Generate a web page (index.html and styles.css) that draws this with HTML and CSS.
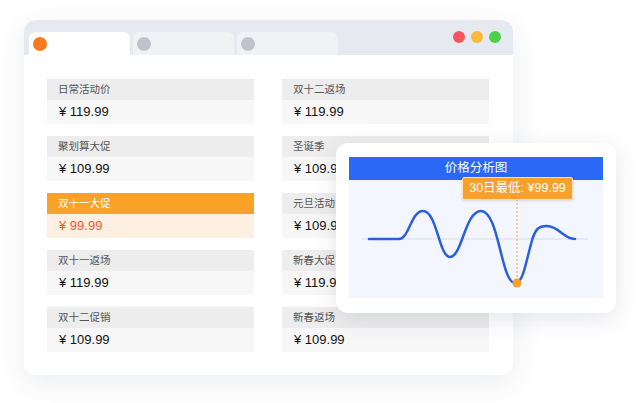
FILE: index.html
```html
<!DOCTYPE html>
<html lang="zh-CN">
<head>
  <meta charset="UTF-8" />
  <title>价格分析</title>
  <link rel="stylesheet" href="styles.css">
</head>
<body>
  <div class="stage">
    <div class="window">
      <div class="title-bar">
        <div class="tab active"><span class="tab-dot"></span></div>
        <div class="tab"><span class="tab-dot"></span></div>
        <div class="tab"><span class="tab-dot"></span></div>
        <div class="controls">
          <span class="ctl red"></span>
          <span class="ctl yellow"></span>
          <span class="ctl green"></span>
        </div>
      </div>
      <div class="content">
        <div class="col">
          <div class="item"><div class="label">日常活动价</div><div class="price">¥ 119.99</div></div>
          <div class="item"><div class="label">聚划算大促</div><div class="price">¥ 109.99</div></div>
          <div class="item hot"><div class="label">双十一大促</div><div class="price">¥ 99.99</div></div>
          <div class="item"><div class="label">双十一返场</div><div class="price">¥ 119.99</div></div>
          <div class="item"><div class="label">双十二促销</div><div class="price">¥ 109.99</div></div>
        </div>
        <div class="col">
          <div class="item"><div class="label">双十二返场</div><div class="price">¥ 119.99</div></div>
          <div class="item"><div class="label">圣诞季</div><div class="price">¥ 109.99</div></div>
          <div class="item"><div class="label">元旦活动</div><div class="price">¥ 109.99</div></div>
          <div class="item"><div class="label">新春大促</div><div class="price">¥ 119.99</div></div>
          <div class="item"><div class="label">新春返场</div><div class="price">¥ 109.99</div></div>
        </div>
      </div>
    </div>

    <div class="chart-card">
      <div class="chart-head">价格分析图</div>
      <div class="chart-body">
        <svg width="254" height="118" viewBox="0 0 254 118">
          <line x1="13" y1="59" x2="239" y2="59" stroke="#d6dcec" stroke-width="1"/>
          <line x1="168" y1="19" x2="168" y2="103" stroke="#f4a03a" stroke-width="1" stroke-dasharray="2 2"/>
          <path d="M20 59 H50 C60 59 62 31 74 31 C88 31 90 77 101 77 C113 77 116 31 132 31 C150 31 152 103 166 103 C174 103 176 86 182 64 C186 48 190 46 198 46 C210 46 214 59 226 59"
                fill="none" stroke="#2a5fe0" stroke-width="2.5" stroke-linecap="round"/>
          <circle cx="168" cy="103" r="4.5" fill="#f7a12b"/>
        </svg>
        <div class="tip">30日最低: ¥99.99</div>
      </div>
    </div>
  </div>
</body>
</html>
```

FILE: styles.css
```css
* { box-sizing: border-box; }
body {
  margin: 0;
  background: #fff;
  font-family: "Liberation Sans", "Noto Sans CJK SC", sans-serif;
}
.stage {
  position: relative;
  width: 640px;
  height: 403px;
  padding: 20px 0 0 24px;
}
.window {
  width: 489px;
  height: 355px;
  background: #fff;
  border-radius: 12px;
  overflow: hidden;
  box-shadow: 0 8px 30px rgba(40, 50, 80, 0.09);
}
.title-bar {
  height: 35px;
  background: #e7e9f1;
  display: flex;
  align-items: flex-end;
  padding-left: 5px;
  gap: 3px;
}
.tab {
  width: 101px;
  height: 23px;
  background: #f1f2f6;
  border-radius: 7px 7px 0 0;
  display: flex;
  align-items: center;
  padding-left: 4px;
}
.tab.active { background: #fff; }
.tab-dot {
  width: 14px;
  height: 14px;
  border-radius: 50%;
  background: #c1c2cc;
}
.tab.active .tab-dot { background: #f87b1f; }
.controls {
  margin-left: auto;
  align-self: flex-start;
  display: flex;
  gap: 6px;
  padding: 11px 12px 0 0;
}
.ctl {
  width: 12px;
  height: 12px;
  border-radius: 50%;
}
.red { background: #f6575f; }
.yellow { background: #f9b93a; }
.green { background: #4cd04b; }
.content {
  display: flex;
  gap: 28px;
  padding: 24px 0 0 23px;
}
.col {
  width: 207px;
  display: flex;
  flex-direction: column;
  gap: 12px;
}
.label {
  height: 21px;
  background: #ededed;
  color: #555;
  font-size: 10.5px;
  line-height: 21px;
  padding-left: 11px;
}
.price {
  height: 24px;
  background: #f7f7f7;
  color: #111;
  font-size: 13px;
  line-height: 24px;
  padding-left: 12px;
}
.hot .label { background: #fba127; color: #fff; }
.hot .price { background: #fdefe1; color: #ef5a32; }
.chart-card {
  position: absolute;
  left: 336px;
  top: 143px;
  width: 280px;
  height: 170px;
  background: #fff;
  border-radius: 12px;
  padding: 14px 13px 15px;
  box-shadow: 0 6px 24px rgba(40, 50, 80, 0.12);
}
.chart-head {
  height: 23px;
  background: #2b68f6;
  color: #fff;
  text-align: center;
  font-size: 12.5px;
  line-height: 23px;
}
.chart-body {
  position: relative;
  height: 118px;
  background: #f3f6fe;
}
.chart-body svg { display: block; }
.tip {
  position: absolute;
  left: 113px;
  top: -3px;
  width: 111px;
  height: 23px;
  background: #f9a02c;
  border: 1px solid #fde2bd;
  border-radius: 2px;
  color: #fff;
  font-size: 12.5px;
  line-height: 21px;
  text-align: center;
  box-shadow: 0 1px 3px rgba(0, 0, 0, 0.12);
}
```
